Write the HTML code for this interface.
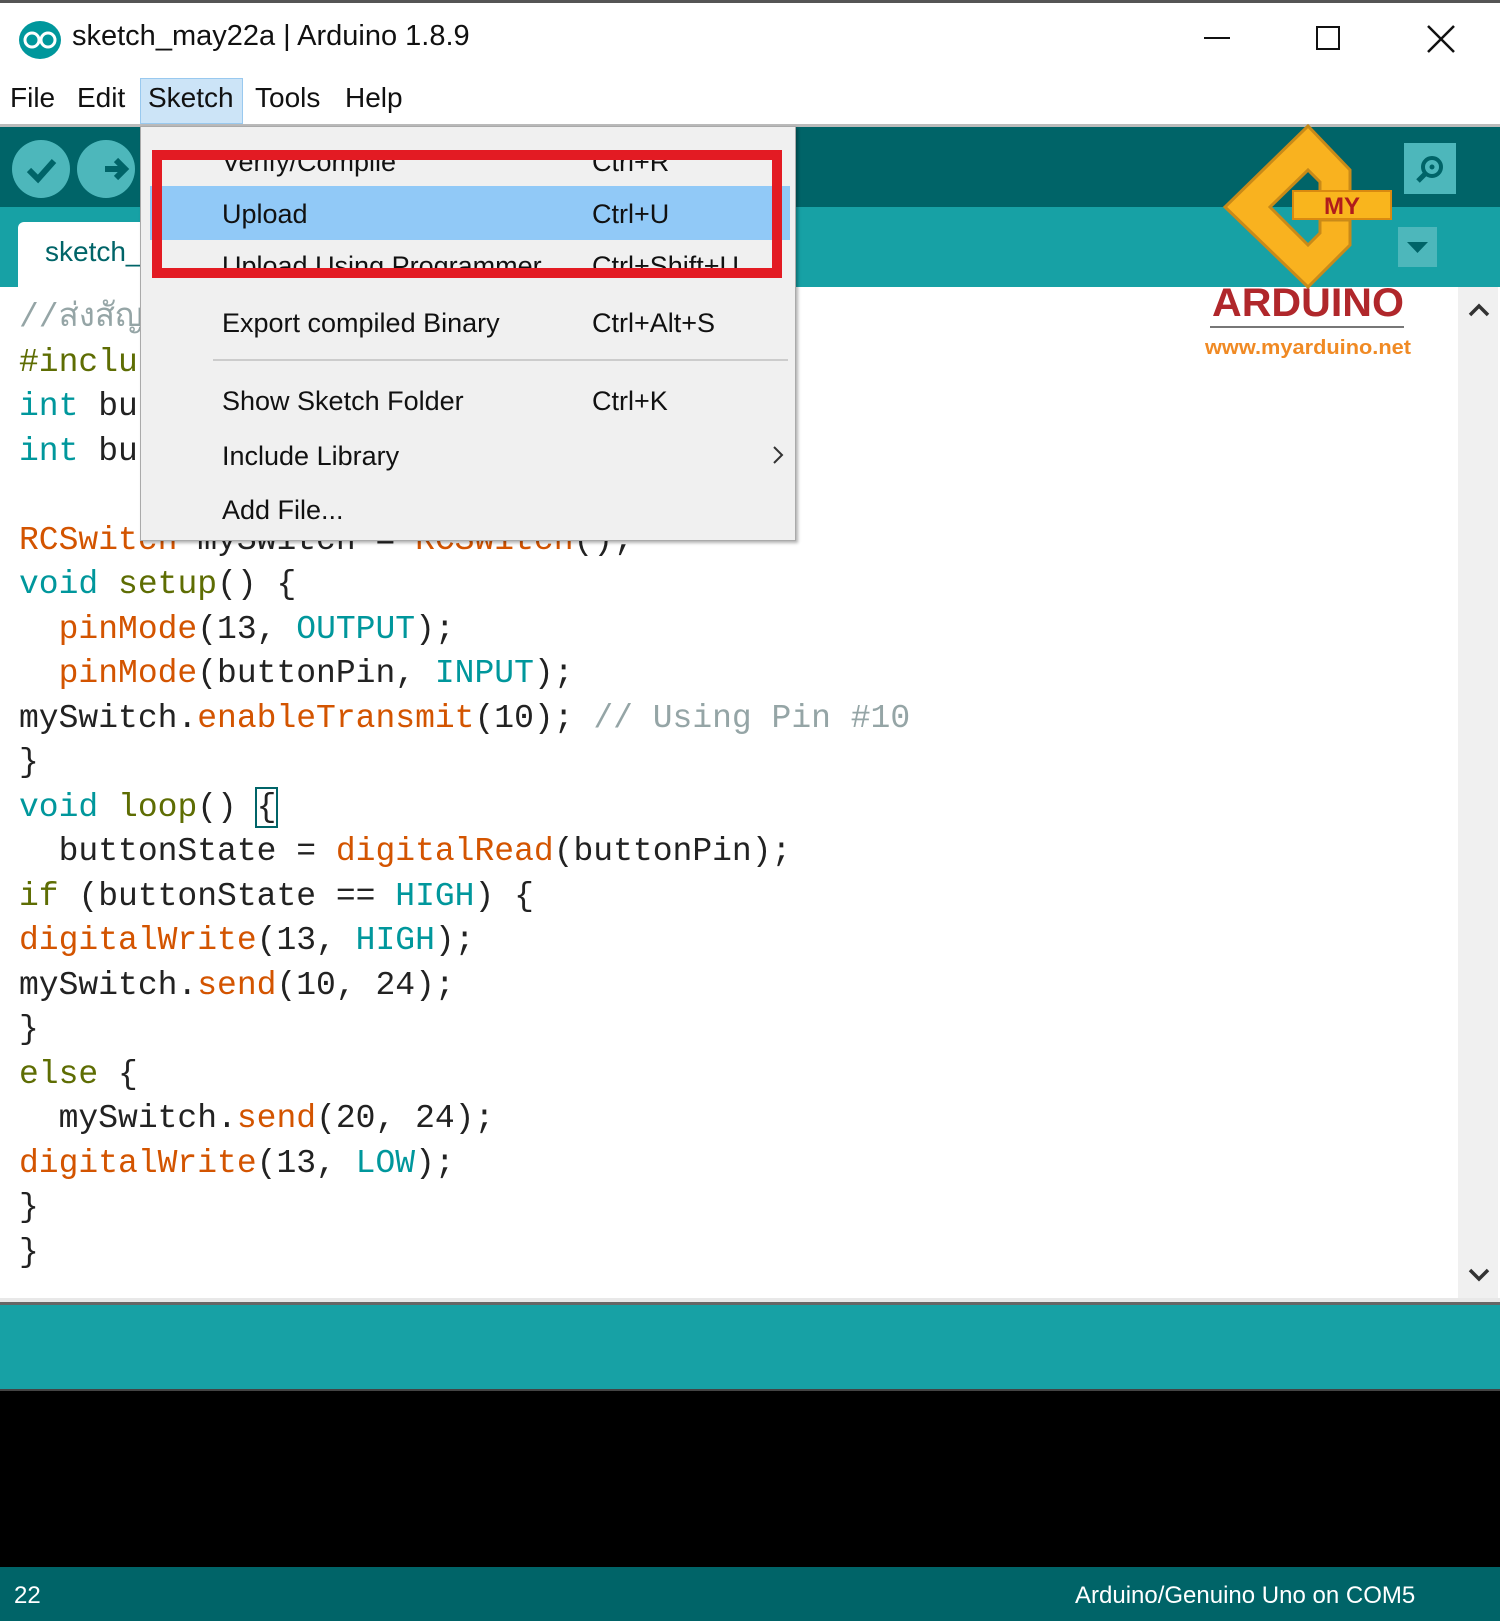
<!DOCTYPE html>
<html><head><meta charset="utf-8"><style>
*{margin:0;padding:0;box-sizing:border-box}
body{width:1500px;height:1621px;overflow:hidden;background:#fff;position:relative;font-family:"Liberation Sans",sans-serif}
.a{position:absolute}
.code{position:absolute;left:19px;font-family:"Liberation Mono","Noto Sans CJK SC",monospace;font-size:33px;line-height:44.5px;white-space:pre;color:#222}
.k{color:#00979c}.o{color:#5e6d03}.f{color:#d35400}.c{color:#95a5a6}
.mi{position:absolute;left:222px;font-size:27px;color:#111;line-height:40px}
.ms{position:absolute;left:592px;font-size:27px;color:#111;line-height:40px}
</style></head><body>
<div class="a" style="left:0;top:0;width:1500px;height:3px;background:#555"></div>
<svg class="a" style="left:18px;top:20px" width="44" height="40"><ellipse cx="22" cy="20" rx="21" ry="19" fill="#00979c"/><circle cx="14" cy="20" r="7" fill="none" stroke="#fff" stroke-width="3"/><circle cx="30" cy="20" r="7" fill="none" stroke="#fff" stroke-width="3"/></svg>
<div class="a" style="left:72px;top:20px;font-size:29px;color:#111">sketch_may22a | Arduino 1.8.9</div>
<div class="a" style="left:1204px;top:37px;width:26px;height:2px;background:#111"></div>
<div class="a" style="left:1316px;top:26px;width:24px;height:24px;border:2px solid #111"></div>
<svg class="a" style="left:1426px;top:24px" width="30" height="30"><path d="M2 2L28 28M28 2L2 28" stroke="#111" stroke-width="2.5"/></svg>
<div class="a" style="left:140px;top:78px;width:103px;height:46px;background:#cce4f7;border:1px solid #99c9ef"></div>
<div class="a" style="left:10px;top:82px;font-size:28px;color:#111">File</div>
<div class="a" style="left:77px;top:82px;font-size:28px;color:#111">Edit</div>
<div class="a" style="left:148px;top:82px;font-size:28px;color:#111">Sketch</div>
<div class="a" style="left:255px;top:82px;font-size:28px;color:#111">Tools</div>
<div class="a" style="left:345px;top:82px;font-size:28px;color:#111">Help</div>
<div class="a" style="left:0;top:124px;width:1500px;height:3px;background:#bbb"></div>
<div class="a" style="left:0;top:127px;width:1500px;height:80px;background:#006468"></div>
<div class="a" style="left:12px;top:140px;width:58px;height:58px;border-radius:50%;background:#4db7bb"></div>
<div class="a" style="left:77px;top:140px;width:58px;height:58px;border-radius:50%;background:#4db7bb"></div>
<svg class="a" style="left:12px;top:140px" width="130" height="58"><path d="M17 30l9 9 16-18" stroke="#006468" stroke-width="6" fill="none"/><path d="M93 29h18M104 20l9 9-9 9" stroke="#006468" stroke-width="6" fill="none"/></svg>
<div class="a" style="left:1404px;top:143px;width:52px;height:51px;background:#4db7bb"></div>
<svg class="a" style="left:1404px;top:143px" width="52" height="51"><circle cx="28" cy="24" r="9" fill="none" stroke="#006468" stroke-width="4"/><path d="M21 31l-7 7" stroke="#006468" stroke-width="5"/><circle cx="28" cy="24" r="2.5" fill="#006468"/></svg>
<div class="a" style="left:0;top:207px;width:1500px;height:80px;background:#17a1a5"></div>
<div class="a" style="left:18px;top:222px;width:130px;height:65px;background:#fff;border-radius:6px 6px 0 0"></div>
<div class="a" style="left:45px;top:236px;font-size:28px;color:#006468">sketch_</div>
<div class="a" style="left:1398px;top:227px;width:39px;height:40px;background:#4db7bb"></div>
<svg class="a" style="left:1398px;top:227px" width="39" height="40"><path d="M9 15h21l-10.5 11z" fill="#006468"/></svg>
<div class="a" style="left:1458px;top:287px;width:40px;height:1011px;background:#f0f0f0"></div>
<svg class="a" style="left:1464px;top:300px" width="30" height="20"><path d="M6 15l9-9 9 9" stroke="#333" stroke-width="3.5" fill="none"/></svg>
<svg class="a" style="left:1464px;top:1265px" width="30" height="20"><path d="M6 5l9 9 9-9" stroke="#333" stroke-width="3.5" fill="none"/></svg>
<div class="code" style="top:296px"><span class="c">//ส่งสัญญาณ</span>
<span class="o">#include</span> &lt;RCSwitch.h&gt;
<span class="k">int</span> buttonPin = 2;
<span class="k">int</span> buttonState = 0;

<span class="f">RCSwitch</span> mySwitch = <span class="f">RCSwitch</span>();
<span class="k">void</span> <span class="o">setup</span>() {
  <span class="f">pinMode</span>(13, <span class="k">OUTPUT</span>);
  <span class="f">pinMode</span>(buttonPin, <span class="k">INPUT</span>);
mySwitch.<span class="f">enableTransmit</span>(10); <span class="c">// Using Pin #10</span>
}
<span class="k">void</span> <span class="o">loop</span>() <span style="outline:2px solid #006468">{</span>
  buttonState = <span class="f">digitalRead</span>(buttonPin);
<span class="o">if</span> (buttonState == <span class="k">HIGH</span>) {
<span class="f">digitalWrite</span>(13, <span class="k">HIGH</span>);
mySwitch.<span class="f">send</span>(10, 24);
}
<span class="o">else</span> {
  mySwitch.<span class="f">send</span>(20, 24);
<span class="f">digitalWrite</span>(13, <span class="k">LOW</span>);
}
}</div>
<svg class="a" style="left:1190px;top:120px" width="240" height="250">
<path d="M118 6L160 50L160 78L130 78L130 62L118 50L80 87L118 125L130 113L130 100L160 100L160 125L118 167L35 87Z" fill="#f9b21f" stroke="#c98a18" stroke-width="3"/>
<rect x="103" y="71" width="98" height="28" fill="#f9b51d" stroke="#d98a10" stroke-width="2"/>
<text x="152" y="94" font-family="Liberation Sans" font-weight="bold" font-size="24" fill="#b01c1c" text-anchor="middle">MY</text>
<text x="22" y="196" font-family="Liberation Sans" font-weight="bold" font-size="40" fill="#b0272b" textLength="192" lengthAdjust="spacingAndGlyphs">ARDUINO</text>
<line x1="20" y1="207" x2="214" y2="207" stroke="#777" stroke-width="2"/>
<text x="15" y="234" font-family="Liberation Sans" font-weight="bold" font-size="20" fill="#f08a24" textLength="206" lengthAdjust="spacingAndGlyphs">www.myarduino.net</text>
</svg>
<div class="a" style="left:140px;top:126px;width:656px;height:415px;background:#f0f0f0;border:1px solid #aaa;box-shadow:2px 2px 3px rgba(0,0,0,.3)"></div>
<div class="mi" style="top:142px">Verify/Compile</div><div class="ms" style="top:142px">Ctrl+R</div>
<div class="a" style="left:150px;top:186px;width:640px;height:54px;background:#91c9f7"></div>
<div class="mi" style="top:194px">Upload</div><div class="ms" style="top:194px">Ctrl+U</div>
<div class="mi" style="top:246px">Upload Using Programmer</div><div class="ms" style="top:246px">Ctrl+Shift+U</div>
<div class="a" style="left:152px;top:150px;width:630px;height:128px;border:10px solid #e31b23"></div>
<div class="a" style="left:152px;top:278px;width:630px;height:10px;background:#f0f0f0"></div>
<div class="mi" style="top:303px">Export compiled Binary</div><div class="ms" style="top:303px">Ctrl+Alt+S</div>
<div class="a" style="left:213px;top:359px;width:575px;height:2px;background:#ccc"></div>
<div class="mi" style="top:381px">Show Sketch Folder</div><div class="ms" style="top:381px">Ctrl+K</div>
<div class="mi" style="top:436px">Include Library</div>
<svg class="a" style="left:770px;top:444px" width="16" height="22"><path d="M4 3l8 8-8 8" stroke="#333" stroke-width="2" fill="none"/></svg>
<div class="mi" style="top:490px">Add File...</div>
<div class="a" style="left:0;top:1298px;width:1500px;height:7px;background:#e8e8e8;border-bottom:3px solid #666"></div>
<div class="a" style="left:0;top:1305px;width:1500px;height:84px;background:#17a1a5"></div>
<div class="a" style="left:0;top:1389px;width:1500px;height:178px;background:#000;border-top:2px solid #444"></div>
<div class="a" style="left:0;top:1567px;width:1500px;height:54px;background:#006468"></div>
<div class="a" style="left:14px;top:1582px;font-size:24px;color:#fff">22</div>
<div class="a" style="left:1075px;top:1582px;font-size:24px;color:#fff">Arduino/Genuino Uno on COM5</div>
</body></html>
